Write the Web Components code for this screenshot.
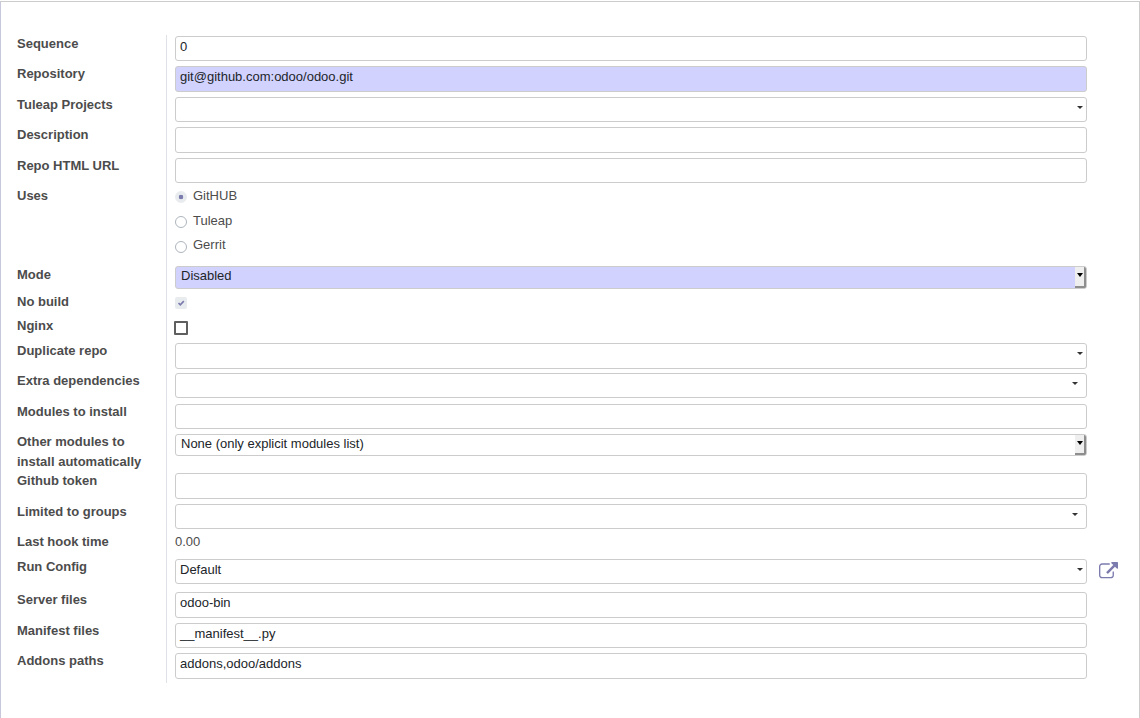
<!DOCTYPE html>
<html>
<head>
<meta charset="utf-8">
<style>
  html, body { margin: 0; height: 100%; background: #fff; }
  body { font: 13px/20px "Liberation Sans", Arial, sans-serif; color: #4c4c4c; overflow: hidden; }
</style>
</head>
<body>
<form-sheet>
  <form-row h="31" label="Sequence"><form-field value="0" style="height:25px"></form-field></form-row>
  <form-row h="30.5" label="Repository"><form-field value="git@github.com:odoo/odoo.git" required></form-field></form-row>
  <form-row h="30.5" label="Tuleap Projects"><form-field caret></form-field></form-row>
  <form-row h="30.5" label="Description"><form-field></form-field></form-row>
  <form-row h="30.5" label="Repo HTML URL"><form-field></form-field></form-row>
  <form-row h="78" label="Uses">
    <radio-group>
      <radio-item checked>GitHUB</radio-item>
      <radio-item>Tuleap</radio-item>
      <radio-item>Gerrit</radio-item>
    </radio-group>
  </form-row>
  <form-row h="30" label="Mode" lift="-1"><native-select value="Disabled" required></native-select></form-row>
  <form-row h="25" label="No build" lift="-4"><check-box checked disabled></check-box></form-row>
  <form-row h="22" label="Nginx" lift="-5"><check-box></check-box></form-row>
  <form-row h="30" label="Duplicate repo"><form-field caret></form-field></form-row>
  <form-row h="30.5" label="Extra dependencies"><form-field caret="far" style="height:25px"></form-field></form-row>
  <form-row h="30.5" label="Modules to install"><form-field style="height:25px"></form-field></form-row>
  <form-row h="39" label="Other modules to install automatically"><native-select value="None (only explicit modules list)" style="height:22px"></native-select></form-row>
  <form-row h="31" label="Github token"><form-field style="height:26px"></form-field></form-row>
  <form-row h="30" label="Limited to groups"><form-field caret="far" style="height:25px"></form-field></form-row>
  <form-row h="25" label="Last hook time"><plain-value>0.00</plain-value></form-row>
  <form-row h="33" label="Run Config"><form-field value="Default" caret style="height:25px"></form-field><link-icon></link-icon></form-row>
  <form-row h="31" label="Server files"><form-field value="odoo-bin" style="height:26px"></form-field></form-row>
  <form-row h="30" label="Manifest files"><form-field value="__manifest__.py" style="height:25px"></form-field></form-row>
  <form-row h="30" label="Addons paths"><form-field value="addons,odoo/addons" style="height:26px"></form-field></form-row>
</form-sheet>

<script>
class FormSheet extends HTMLElement {
  connectedCallback() {
    this.attachShadow({ mode: 'open' });
    this.shadowRoot.innerHTML = `
      <style>
        :host {
          display: block;
          box-sizing: border-box;
          height: 717px;
          margin-top: 1px;
          padding-top: 33px;
          border: 1px solid #ccc;
          border-left-color: #c8c8dc;
          border-bottom: 0;
        }
      </style>
      <slot></slot>`;
  }
}

class FormRow extends HTMLElement {
  connectedCallback() {
    const lift = this.getAttribute('lift') || -2;
    this.attachShadow({ mode: 'open' });
    this.shadowRoot.innerHTML = `
      <style>
        :host {
          display: grid;
          grid-template-columns: 165px 1fr;
          height: ${this.getAttribute('h')}px;
        }
        :host(:first-child) .value { padding-top: .5px; }
        :host(:first-child) .label { margin-top: -1.5px; }
        .label {
          padding-left: 16px;
          margin-top: ${lift}px;
          font-weight: bold;
          line-height: 20px;
          color: #4c4c4c;
          width: 132px;
        }
        .value {
          display: flex;
          align-items: flex-start;
          border-left: 1px solid #dee2e6;
          padding: 0 0 0 8px;
        }
      </style>
      <div class="label">${this.getAttribute('label')}</div>
      <div class="value"><slot></slot></div>`;
  }
}

class FormField extends HTMLElement {
  connectedCallback() {
    const value = this.getAttribute('value') || '';
    const caret = this.getAttribute('caret');
    this.attachShadow({ mode: 'open' });
    this.shadowRoot.innerHTML = `
      <style>
        :host {
          display: block;
          box-sizing: border-box;
          flex: none;
          width: 912px;
          height: 25.5px;
          padding: 0 4px;
          position: relative;
          border: 1px solid #ccc;
          border-radius: 3px;
          line-height: 19px;
          color: #212529;
          background: #fff;
        }
        :host([required]) { background: #d2d2ff; }
        .caret {
          position: absolute;
          top: 8px;
          right: ${caret === 'far' ? 8 : 3}px;
          border: 3px solid transparent;
          border-top: 3px solid #333;
          border-bottom: 0;
        }
      </style>
      ${value}
      ${caret !== null ? '<span class="caret"></span>' : ''}`;
  }
}

class NativeSelect extends HTMLElement {
  connectedCallback() {
    this.attachShadow({ mode: 'open' });
    this.shadowRoot.innerHTML = `
      <style>
        :host {
          display: flex;
          box-sizing: border-box;
          flex: none;
          width: 912px;
          height: 23px;
          border: 1px solid #ccc;
          border-radius: 3px;
          color: #212529;
          line-height: 18px;
          background: #fff;
          overflow: hidden;
        }
        :host([required]) { background: #d2d2ff; }
        .text { flex: 1; padding-left: 5px; }
        .button {
          box-sizing: border-box;
          width: 11px;
          display: flex;
          justify-content: center;
          padding-top: 6px;
          background: #efefef;
          border-right: 2px solid #8e8e8e;
          border-bottom: 2px solid #8e8e8e;
        }
        .arrow {
          width: 0; height: 0;
          border: 3.5px solid transparent;
          border-top: 4px solid #000;
          border-bottom: 0;
        }
      </style>
      <div class="text">${this.getAttribute('value')}</div>
      <div class="button"><span class="arrow"></span></div>`;
  }
}

class PlainValue extends HTMLElement {
  connectedCallback() {
    this.attachShadow({ mode: 'open' });
    this.shadowRoot.innerHTML = `
      <style>
        :host { display: block; margin-top: -2px; color: #4c4c4c; }
      </style>
      <slot></slot>`;
  }
}

class RadioGroup extends HTMLElement {
  connectedCallback() {
    this.attachShadow({ mode: 'open' });
    this.shadowRoot.innerHTML = `
      <style>
        :host { display: flex; flex-direction: column; gap: 4.5px; margin-top: -2px; }
      </style>
      <slot></slot>`;
  }
}

class RadioItem extends HTMLElement {
  connectedCallback() {
    this.attachShadow({ mode: 'open' });
    this.shadowRoot.innerHTML = `
      <style>
        :host { display: flex; align-items: flex-start; gap: 6px; line-height: 20px; color: #4c4c4c; }
        .dot {
          box-sizing: border-box;
          width: 12px; height: 12px;
          margin-top: 5px;
          border: 1px solid #adb5bd;
          border-radius: 50%;
          background: #fff;
        }
        :host(:last-child) .dot { margin-top: 6px; }
        :host([checked]) .dot {
          border-color: #e9ecef;
          background: radial-gradient(circle, #7c7bad 0 2px, #e9ecef 2.6px);
        }
      </style>
      <span class="dot"></span><slot></slot>`;
  }
}

class CheckBox extends HTMLElement {
  connectedCallback() {
    this.attachShadow({ mode: 'open' });
    this.shadowRoot.innerHTML = `
      <style>
        :host {
          display: block;
          box-sizing: border-box;
          width: 14px; height: 14px;
          margin-left: -1px;
          border: 2px solid #5f5f5f;
          border-radius: 1px;
          background: #fff;
        }
        :host([disabled]) {
          width: 12px; height: 12px;
          margin: 1px 0 0 0;
          border: 0;
          border-radius: 2px;
          background: #e9ecef;
        }
        svg { display: block; }
      </style>
      ${this.hasAttribute('checked') ? '<svg width="12" height="12" viewBox="0 0 12 12"><path d="M3.5 6l1.8 1.8L8.8 4.2" fill="none" stroke="#7c7bad" stroke-width="1.7"/></svg>' : ''}`;
  }
}

class LinkIcon extends HTMLElement {
  connectedCallback() {
    this.attachShadow({ mode: 'open' });
    this.shadowRoot.innerHTML = `
      <style>
        :host { display: block; margin: 3px 0 0 12px; width: 19px; height: 19px; }
        svg { display: block; }
      </style>
      <svg width="19" height="19" viewBox="0 0 1792 1792"><path fill="#7c7bad" d="M1408 928v320q0 119-84.5 203.5t-203.5 84.5h-832q-119 0-203.5-84.5t-84.5-203.5v-832q0-119 84.5-203.5t203.5-84.5h704q14 0 23 9t9 23v64q0 14-9 23t-23 9h-704q-66 0-113 47t-47 113v832q0 66 47 113t113 47h832q66 0 113-47t47-113v-320q0-14 9-23t23-9h64q14 0 23 9t9 23zm384-864v512q0 26-19 45t-45 19-45-19l-176-176-652 652q-10 10-23 10t-23-10l-114-114q-10-10-10-23t10-23l652-652-176-176q-19-19-19-45t19-45 45-19h512q26 0 45 19t19 45z"/></svg>`;
  }
}

customElements.define('form-sheet', FormSheet);
customElements.define('form-row', FormRow);
customElements.define('form-field', FormField);
customElements.define('native-select', NativeSelect);
customElements.define('plain-value', PlainValue);
customElements.define('radio-group', RadioGroup);
customElements.define('radio-item', RadioItem);
customElements.define('check-box', CheckBox);
customElements.define('link-icon', LinkIcon);
</script>
</body>
</html>
